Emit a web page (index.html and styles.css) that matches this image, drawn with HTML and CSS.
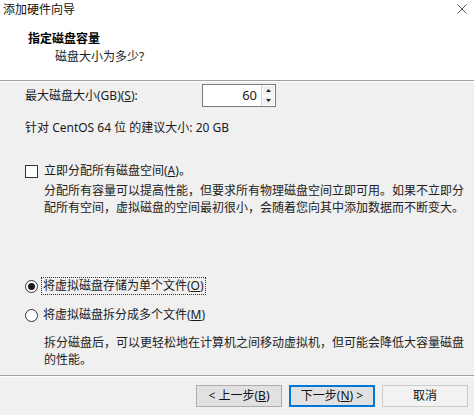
FILE: index.html
```html
<!DOCTYPE html>
<html lang="zh-CN">
<head>
<meta charset="utf-8">
<title>添加硬件向导</title>
<link rel="stylesheet" href="styles.css">
</head>
<body>
<div class="dialog">
  <header class="header">
    <div class="titlebar">
      <span class="title">添加硬件向导</span>
      <svg class="close" width="10" height="10" viewBox="0 0 10 10"><path d="M0.5 0.5 L9.5 9.5 M9.5 0.5 L0.5 9.5" stroke="#555" stroke-width="1" fill="none"/></svg>
    </div>
    <div class="heading">指定磁盘容量</div>
    <div class="subheading">磁盘大小为多少?</div>
  </header>
  <main class="body">
    <div class="size-row">
      <span class="label">最大磁盘大小(GB)(<u>S</u>):</span>
      <div class="spin">
        <span class="spin-value">60</span>
        <div class="spin-btns">
          <span class="spin-btn"><svg width="5" height="3" viewBox="0 0 5 3"><path d="M0 3 L2.5 0 L5 3 Z" fill="#222"/></svg></span>
          <span class="spin-btn"><svg width="5" height="3" viewBox="0 0 5 3"><path d="M0 0 L5 0 L2.5 3 Z" fill="#222"/></svg></span>
        </div>
      </div>
    </div>
    <div class="hint">针对 <span class="lat">CentOS 64</span> 位 的建议大小<span class="lat">: 20 GB</span></div>

    <label class="option check-row">
      <span class="checkbox"></span>
      <span class="opt-text">立即分配所有磁盘空间(<u>A</u>)。</span>
    </label>
    <p class="desc">分配所有容量可以提高性能，但要求所有物理磁盘空间立即可用。如果不立即分配所有空间，虚拟磁盘的空间最初很小，会随着您向其中添加数据而不断变大。</p>

    <label class="option radio-row first-radio">
      <span class="radio checked"></span>
      <span class="opt-text focus">将虚拟磁盘存储为单个文件(<u>O</u>)</span>
    </label>
    <label class="option radio-row second-radio">
      <span class="radio"></span>
      <span class="opt-text">将虚拟磁盘拆分成多个文件(<u>M</u>)</span>
    </label>
    <p class="desc desc-split">拆分磁盘后，可以更轻松地在计算机之间移动虚拟机，但可能会降低大容量磁盘的性能。</p>
  </main>
  <footer class="footer">
    <button class="btn">&lt; 上一步(<u>B</u>)</button>
    <button class="btn btn-default">下一步(<u>N</u>) &gt;</button>
    <button class="btn btn-cancel">取消</button>
  </footer>
</div>
</body>
</html>
```
FILE: styles.css
```css
html, body {
  margin: 0;
  padding: 0;
}
body {
  width: 474px;
  height: 415px;
  overflow: hidden;
  background: #f0f0f0;
  font-family: "Noto Sans", "Noto Sans CJK SC", sans-serif;
  font-size: 12px;
  color: #1a1a1a;
}
.dialog {
  display: flex;
  flex-direction: column;
  height: 415px;
}
.header {
  background: #ffffff;
  height: 81px;
  box-sizing: border-box;
  border-bottom: 1px solid #a0a0a0;
  box-shadow: 0 1px 0 #ffffff;
}
.titlebar {
  display: flex;
  align-items: center;
  justify-content: space-between;
  height: 18px;
  padding: 0 7px 0 3px;
}
.title {
  font-family: "Noto Sans CJK SC", sans-serif;
  font-size: 12px;
  color: #111;
  line-height: 18px;
}
.heading {
  margin: 13px 0 0 28px;
  font-weight: bold;
  line-height: 16px;
  color: #000;
}
.subheading {
  margin: 2px 0 0 55px;
  line-height: 16px;
  color: #222;
}
.body {
  height: 292px;
  margin-top: 2px;
  padding-left: 25px;
  display: flex;
  flex-direction: column;
  box-sizing: border-box;
}
.size-row {
  display: flex;
  align-items: center;
  height: 23px;
  margin-top: 1px;
}
.label {
  width: 177px;
  line-height: 16px;
}
.spin {
  display: flex;
  width: 74px;
  height: 23px;
  box-sizing: border-box;
  border: 1px solid #7a7a7a;
  background: #fff;
}
.spin-value {
  flex: 1;
  text-align: right;
  padding-right: 4px;
  line-height: 21px;
  font-size: 13px;
}
.spin-btns {
  display: flex;
  flex-direction: column;
  width: 13px;
  border-left: 1px solid #d0d0d0;
}
.spin-btn {
  flex: 1;
  display: flex;
  align-items: center;
  justify-content: center;
  background: #f0f0f0;
  border: 1px solid #fff;
}
.hint {
  margin-top: 13px;
  line-height: 16px;
}
.option {
  display: flex;
  align-items: center;
  line-height: 16px;
}
.check-row {
  margin-top: 27px;
}
.checkbox {
  width: 13px;
  height: 13px;
  box-sizing: border-box;
  border: 1px solid #333;
  background: #fff;
  margin-right: 5px;
}
.radio {
  width: 13px;
  height: 13px;
  box-sizing: border-box;
  border: 1px solid #333;
  border-radius: 50%;
  background: #fff;
  margin-right: 4px;
  display: flex;
  align-items: center;
  justify-content: center;
}
.radio.checked::after {
  content: "";
  width: 7px;
  height: 7px;
  border-radius: 50%;
  background: #1a1a1a;
}
.opt-text {
  padding: 0 1px;
}
.opt-text.focus {
  outline: 1px dotted #333;
}
.desc {
  margin: 3px 0 0 19px;
  width: 424px;
  line-height: 17px;
  color: #222;
}
.first-radio {
  margin-top: 62px;
}
.second-radio {
  margin-top: 13px;
}
.desc-split {
  margin-top: 11px;
}
.footer {
  flex: 1;
  border-top: 1px solid #a0a0a0;
  box-shadow: inset 0 1px 0 #ffffff;
  display: flex;
  justify-content: flex-end;
  align-items: flex-start;
  gap: 7px;
  padding: 9px 6px 0 0;
}
.btn {
  width: 86px;
  height: 22px;
  box-sizing: border-box;
  border: 1px solid #adadad;
  background: #e1e1e1;
  font-family: "Noto Sans", "Noto Sans CJK SC", sans-serif;
  font-size: 12px;
  color: #111;
  padding: 0;
  line-height: 20px;
}
.btn-default {
  border: 1px solid #0078d7;
  box-shadow: inset 0 0 0 1px #0078d7;
}
.btn-cancel {
  background: #f2f2f2;
  border-color: #cccccc;
}
u {
  text-decoration: underline;
}
```
